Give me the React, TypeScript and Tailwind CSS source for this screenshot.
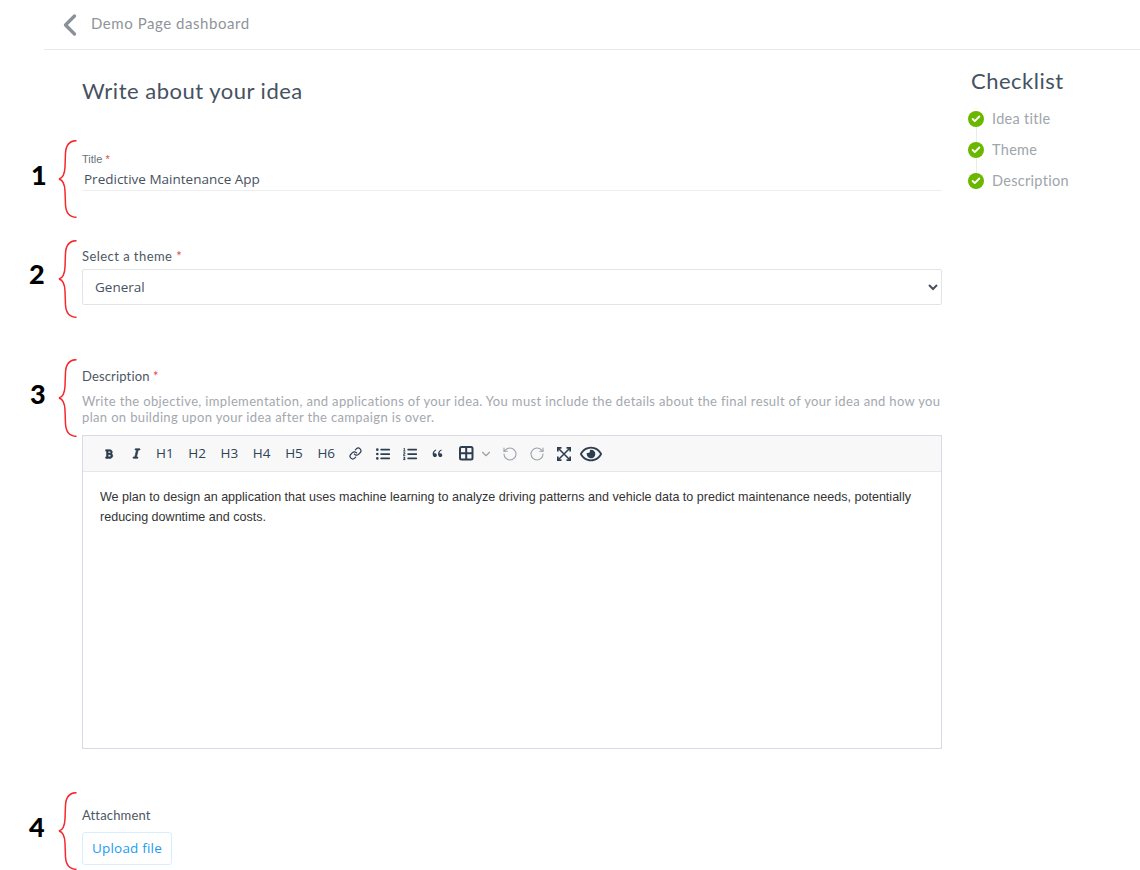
import { ChevronDown, ChevronLeft, Link, RotateCcw, RotateCw, Check } from 'lucide-react'
import { FaBold, FaItalic, FaListUl, FaListOl, FaRegEye } from 'react-icons/fa'
import { RiDoubleQuotesL } from 'react-icons/ri'

const checklist = ['Idea title', 'Theme', 'Description']
const headings = ['H1', 'H2', 'H3', 'H4', 'H5', 'H6']

// red brace + number drawn on top of the screenshot
function Marker({ n, top, numLeft, numTop }: { n: string; top: number; numLeft: string; numTop: string }) {
  return (
    <div className="absolute left-0 w-[82px] h-[78px]" style={{ top }}>
      <span className={`absolute ${numLeft} ${numTop} font-['Lato',sans-serif] font-black text-[27px] leading-[36px] text-black`}>{n}</span>
      <svg className="absolute left-[57px] top-0" width="21" height="78" viewBox="0 0 21 78" fill="none">
        <path d="M19.5 0.7C12 0.7 9 5 8.5 13L8 27C7.7 34 6 38 2 39C6 40 7.7 44 8 51L8.5 65C9 73 12 77.3 19.5 77.3" stroke="#f5282d" strokeWidth="1.5" />
      </svg>
    </div>
  )
}

function Required() {
  return <span className="text-[#e5484d]"> *</span>
}

export default function App() {
  return (
    <div className="relative h-[870px] w-[1140px] overflow-hidden bg-white font-['Lato',sans-serif]">
      <header className="ml-[44px] h-[50px] border-b border-[#e9eaec] flex items-center">
        <ChevronLeft className="ml-[8px] text-[#8a9099]" size={36} strokeWidth={2.2} />
        <span className="ml-[3px] pb-[2px] text-[15px] tracking-[0.55px] text-[#8f9499]">Demo Page dashboard</span>
      </header>

      <div className="flex">
        <main className="ml-[82px] w-[860px]">
          <h1 className="mt-[26px] text-[22px] leading-[30px] tracking-[0.5px] text-[#465260]">Write about your idea</h1>

          <div className="mt-[47px]">
            <label className="block text-[11px] leading-[12px] text-[#6b727a] font-['Liberation_Sans',sans-serif]">Title<Required /></label>
            <input
              readOnly
              value="Predictive Maintenance App"
              className="block w-full h-[26px] border-b border-[#eceef0] px-[2px] pt-[3px] text-[13.5px] text-[#47515e] font-['Open_Sans',sans-serif] outline-none"
            />
          </div>

          <div className="mt-[57px]">
            <label className="block text-[13px] leading-[16px] tracking-[0.45px] text-[#4d5763]">Select a theme<Required /></label>
            <select className="mt-[5px] block w-full h-[36px] rounded-[2px] border border-[#e2e4e7] bg-white pl-[8px] text-[13.5px] text-[#47515e] font-['Open_Sans',sans-serif]">
              <option>General</option>
            </select>
          </div>

          <div className="mt-[63px]">
            <label className="block text-[13px] leading-[16px] tracking-[0.15px] text-[#4d5763]">Description<Required /></label>
            <p className="mt-[9px] text-[13px] leading-[16px] tracking-[0.35px] text-[#a3a8ae]">
              Write the objective, implementation, and applications of your idea. You must include the details about the final result of your idea and how you plan on building upon your idea after the campaign is over.
            </p>
            <div className="mt-[10px] h-[314px] border border-[#dad9e6]">
              <div className="h-[36px] bg-[#f8f8f9] border-b border-[#e6e7ea] flex items-center text-[#2d3e50]">
                <FaBold className="ml-[21px] stroke-[30px]" size={10} />
                <FaItalic className="ml-[17px] stroke-[30px]" size={11} />
                <div className="ml-[14px] flex gap-[14.6px] font-['Open_Sans',sans-serif] text-[13.5px] text-[#2f4358]">
                  {headings.map((h) => <span key={h}>{h}</span>)}
                </div>
                <Link className="ml-[14px]" size={13} strokeWidth={2.2} />
                <FaListUl className="ml-[14px]" size={14} />
                <FaListOl className="ml-[13px]" size={14} />
                <RiDoubleQuotesL className="ml-[14px]" size={13} />
                <svg className="ml-[15px]" width="15" height="15" viewBox="0 0 15 15" fill="none" stroke="currentColor" strokeWidth="2">
                  <rect x="1" y="1" width="12.5" height="12.5" rx="1.5" />
                  <path d="M7.2 1V13.5M1 7.2H13.5" />
                </svg>
                <ChevronDown className="ml-[5px] text-[#9ba1a8]" size={14} />
                <RotateCcw className="ml-[9px] text-[#9ba1a8]" size={16} strokeWidth={1.6} />
                <RotateCw className="ml-[11px] text-[#9ba1a8]" size={16} strokeWidth={1.6} />
                <svg className="ml-[12px]" width="14" height="14" viewBox="0 0 14 14" fill="none" stroke="currentColor">
                  <path d="M0.8 4.5V0.8H4.5M9.5 0.8H13.2V4.5M13.2 9.5V13.2H9.5M4.5 13.2H0.8V9.5" strokeWidth="1.8" />
                  <path d="M1 1L13 13M13 1L1 13" strokeWidth="1.5" />
                </svg>
                <FaRegEye className="ml-[9px]" size={22} />
              </div>
              <div className="px-[17px] pt-[15px] text-[12.55px] leading-[20px] text-[#333] font-['Liberation_Sans',sans-serif]">
                We plan to design an application that uses machine learning to analyze driving patterns and vehicle data to predict maintenance needs, potentially reducing downtime and costs.
              </div>
            </div>
          </div>

          <div className="mt-[58px]">
            <label className="block text-[13px] leading-[16px] tracking-[0.15px] text-[#4d5763]">Attachment</label>
            <button className="mt-[9px] block h-[33px] w-[90px] rounded-[3px] border border-[#d8eeff] text-[13.5px] tracking-[0.2px] text-[#1b9bf5] font-['Open_Sans',sans-serif]">Upload file</button>
          </div>
        </main>

        <aside className="ml-[26px]">
          <h2 className="mt-[16px] ml-[3px] text-[22px] leading-[30px] tracking-[0.5px] text-[#465260]">Checklist</h2>
          <ul className="relative mt-[15px] flex flex-col gap-[15px]">
            <div className="absolute left-[7.5px] top-[10px] h-[60px] w-px bg-[#e9eaec]" />
            {checklist.map((item) => (
              <li key={item} className="relative flex items-center h-[16px]">
                <span className="flex h-[16px] w-[16px] items-center justify-center rounded-full bg-[#6bb700]">
                  <Check className="text-white" size={10} strokeWidth={4.5} />
                </span>
                <span className="ml-[8px] text-[14.5px] tracking-[0.3px] text-[#a0a5ab]">{item}</span>
              </li>
            ))}
          </ul>
        </aside>
      </div>

      <Marker n="1" top={140} numLeft="left-[31px]" numTop="top-[17px]" />
      <Marker n="2" top={240} numLeft="left-[29px]" numTop="top-[16px]" />
      <Marker n="3" top={359} numLeft="left-[30px]" numTop="top-[17px]" />
      <Marker n="4" top={792} numLeft="left-[29px]" numTop="top-[17px]" />
    </div>
  )
}
